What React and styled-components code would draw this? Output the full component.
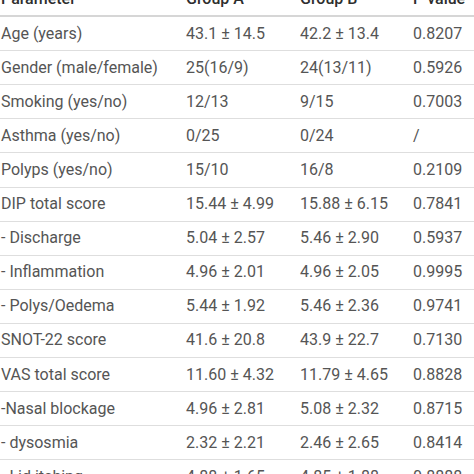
import styled, { createGlobalStyle } from "styled-components";

const GlobalStyle = createGlobalStyle`
  html, body {
    margin: 0;
    padding: 0;
    background: #ffffff;
    overflow: hidden;
  }
`;

const Page = styled.div`
  width: 474px;
  height: 474px;
  overflow: hidden;
  font-family: Roboto, "Liberation Sans", sans-serif;
`;

const Table = styled.div`
  margin-top: -18px;
  display: flex;
  flex-direction: column;
`;

const Row = styled.div`
  display: grid;
  grid-template-columns: 186px 114px 113px 1fr;
  height: 33.1px;
  align-items: center;
  border-bottom: ${(p) => (p.$head ? "2px solid #d6d6d6" : "1px solid #dedede")};
  box-sizing: content-box;
`;

const Cell = styled.div`
  font-size: 16px;
  line-height: 20px;
  white-space: nowrap;
  color: ${(p) => (p.$head ? "#2e2e2e" : "#555555")};
  font-weight: ${(p) => (p.$head ? 500 : 400)};
  padding-left: ${(p) => (p.$first ? "1px" : "0")};
`;

const rows = [
  ["Age (years)", "43.1 ± 14.5", "42.2 ± 13.4", "0.8207"],
  ["Gender (male/female)", "25(16/9)", "24(13/11)", "0.5926"],
  ["Smoking (yes/no)", "12/13", "9/15", "0.7003"],
  ["Asthma (yes/no)", "0/25", "0/24", "/"],
  ["Polyps (yes/no)", "15/10", "16/8", "0.2109"],
  ["DIP total score", "15.44 ± 4.99", "15.88 ± 6.15", "0.7841"],
  ["- Discharge", "5.04 ± 2.57", "5.46 ± 2.90", "0.5937"],
  ["- Inflammation", "4.96 ± 2.01", "4.96 ± 2.05", "0.9995"],
  ["- Polys/Oedema", "5.44 ± 1.92", "5.46 ± 2.36", "0.9741"],
  ["SNOT-22 score", "41.6 ± 20.8", "43.9 ± 22.7", "0.7130"],
  ["VAS total score", "11.60 ± 4.32", "11.79 ± 4.65", "0.8828"],
  ["-Nasal blockage", "4.96 ± 2.81", "5.08 ± 2.32", "0.8715"],
  ["- dysosmia", "2.32 ± 2.21", "2.46 ± 2.65", "0.8414"],
  ["- Lid itching", "4.88 ± 1.65", "4.85 ± 1.88", "0.8888"],
];

const App = () => {
  return (
    <>
      <GlobalStyle />
      <Page>
        <Table>
          <Row $head>
            <Cell $head $first>Parameter</Cell>
            <Cell $head>Group A</Cell>
            <Cell $head>Group B</Cell>
            <Cell $head>P value</Cell>
          </Row>
          {rows.map((r) => (
            <Row key={r[0]}>
              <Cell $first>{r[0]}</Cell>
              <Cell>{r[1]}</Cell>
              <Cell>{r[2]}</Cell>
              <Cell>{r[3]}</Cell>
            </Row>
          ))}
        </Table>
      </Page>
    </>
  );
};

export default App;
